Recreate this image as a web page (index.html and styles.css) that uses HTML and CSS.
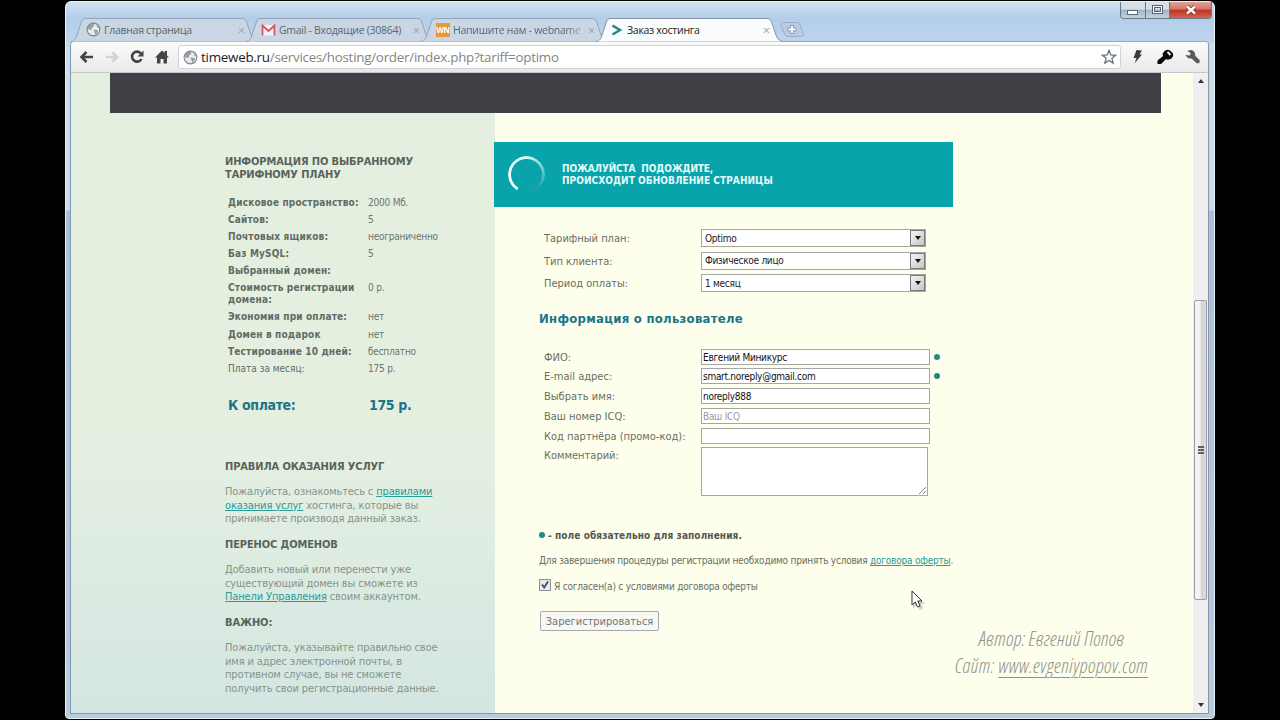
FILE: index.html
```html
<!DOCTYPE html>
<html lang="ru">

<head>
    <meta charset="UTF-8">
    <title>Заказ хостинга</title>
    <link rel="stylesheet" href="styles.css">
</head>

<body>
    <svg class="defs" width="0" height="0">
        <defs>
            <symbol id="tab-shape" viewBox="0 0 187 24">
                <path d="M0 23.5 C4 23 5 20 6 17 L10 5 C11 2 12 .5 15 .5 H171 C174 .5 175 2 176 5 L180 17 C181 20 183 23 187 23.5" />
            </symbol>
            <symbol id="globe" viewBox="0 0 16 16">
                <circle cx="8" cy="8" r="6.8" fill="#e9edf0" stroke="#7f858a" stroke-width="1.2" />
                <path d="M3 4 L6 2 L9 2.5 L8 5 L6 6 L6.5 8 L4 8.5 L2 7z M8 8 L12 8.5 L13 10 L10 13.5 L9 11z M11 3 L14 6 L12 6z" fill="#989da2" />
            </symbol>
        </defs>
    </svg>

    <div class="window">
        <div class="window-buttons">
            <div class="wb wb-min"><svg width="12" height="6"><rect x=".5" y=".5" width="10" height="4" fill="#fff" stroke="#5c6875" /></svg></div>
            <div class="wb wb-max"><svg width="12" height="10"><rect x="1.5" y="1.5" width="8" height="6" fill="none" stroke="#566270" stroke-width="3" /><rect x="1.5" y="1.5" width="8" height="6" fill="none" stroke="#fff" /></svg></div>
            <div class="wb wb-close"><svg width="12" height="10"><path d="M2 1.5 L10 8.5 M10 1.5 L2 8.5" stroke="#7a3030" stroke-width="4" /><path d="M2 1.5 L10 8.5 M10 1.5 L2 8.5" stroke="#fff" stroke-width="2.4" /></svg></div>
        </div>

        <div class="tabs">
            <div class="tab">
                <svg class="tab-bg"><use href="#tab-shape" /></svg>
                <svg class="tab-icon" width="15" height="15"><use href="#globe" /></svg>
                <span class="tab-title">Главная страница</span>
                <span class="tab-close">×</span>
            </div>
            <div class="tab">
                <svg class="tab-bg"><use href="#tab-shape" /></svg>
                <svg class="tab-icon" width="15" height="12"><rect x=".5" y="1" width="14" height="10.5" fill="#f3f0f3" /><path d="M1.5 11.500 V1.500 L7.500 7 L13.500 1.500 V11.500" fill="none" stroke="#d2526a" stroke-width="1.800" /></svg>
                <span class="tab-title">Gmail - Входящие (30864)</span>
                <span class="tab-close">×</span>
            </div>
            <div class="tab">
                <svg class="tab-bg"><use href="#tab-shape" /></svg>
                <span class="tab-icon wn">WN</span>
                <span class="tab-title fade">Напишите нам - webname</span>
                <span class="tab-close">×</span>
            </div>
            <div class="tab active">
                <svg class="tab-bg"><use href="#tab-shape" /></svg>
                <svg class="tab-icon" width="12" height="12"><path d="M1.5 1.5 L9 6 L1.5 10.5" fill="none" stroke="#168a87" stroke-width="2.4" /></svg>
                <span class="tab-title">Заказ хостинга</span>
                <span class="tab-close">×</span>
            </div>
            <svg class="new-tab" width="25" height="15"><path d="M2 .5 H17 Q19 .5 20 3 L23.5 12 Q24 14.5 21 14.5 H8 Q5.500 14.500 4.500 12 L1 3 Q.5 .5 2 .5z" fill="#b9cce3" stroke="#9aaec8" /><path d="M12 3 V12 M7.500 7.500 H16.500" stroke="#8b9eb8" stroke-width="4" /><path d="M12 4 V11 M8.500 7.500 H15.500" stroke="#fff" stroke-width="2" /></svg>
        </div>

        <div class="browser">
            <div class="toolbar">
                <svg class="nav" width="92" height="18" fill="none" stroke="#444" stroke-width="2.6">
                    <path d="M14 9 H2.500 M7.500 4 L2.500 9 L7.500 14" />
                    <path d="M27 9 H38 M33.500 4.500 L38 9 L33.500 13.500" stroke="#d2d2d2" />
                    <path d="M62 5.500 A5 5 0 1 0 62.500 11" />
                    <path d="M64.500 2.500 V8.500 H58.500z" fill="#444" stroke="none" />
                    <path d="M76 9.500 L83 2.500 L85.500 5 V3 H88 V7.500 L90 9.500 H88 V15.500 H84.500 V11 H81.500 V15.500 H78 V9.500z" fill="#444" stroke="none" />
                </svg>
                <div class="address">
                    <svg width="15" height="15"><use href="#globe" /></svg>
                    <span class="url"><b>timeweb.ru</b>/services/hosting/order/index.php?tariff=optimo</span>
                    <svg class="star" width="16" height="16"><path d="M8 1.500 L9.800 6 L14.500 6.300 L10.900 9.300 L12.100 14 L8 11.400 L3.900 14 L5.100 9.300 L1.500 6.300 L6.200 6z" fill="#fff" stroke="#667078" stroke-width="1.300" /></svg>
                </div>
                <svg class="tools" width="72" height="18">
                    <path d="M6.500 2 L12 2.500 L9.500 6.500 L12 6.500 L4.500 15.500 L6.500 10 L3.500 10z" fill="#3c3c3c" />
                    <path d="M34 3.500 Q37 .5 40 2.500 L43 5.500 Q44 8 41.500 10.500 Q38 12.500 36 11 L31 16 H27.500 V12.500 L33 8 Q32 5.500 34 3.500z" fill="#080808" />
                    <path d="M37.500 4 L40.500 7" stroke="#f2f2f2" stroke-width="2" />
                    <path d="M57.500 3 Q61 1 64 3.500 Q65.500 5.500 65 7.500 L69.500 12 Q70.500 15.500 67 15.500 L61.500 10.500 Q57.500 11 55.500 7 L60 7.500 L60.500 5z" fill="#5a5a5a" />
                </svg>
            </div>

            <div class="viewport">
                <div class="page">
                    <div class="site-header"></div>
                    <div class="columns">
                        <div class="sidebar">
                            <h2>ИНФОРМАЦИЯ ПО ВЫБРАННОМУ<br>ТАРИФНОМУ ПЛАНУ</h2>
                            <dl class="plan">
                                <dt>Дисковое пространство:</dt><dd>2000 Мб.</dd>
                                <dt>Сайтов:</dt><dd>5</dd>
                                <dt>Почтовых ящиков:</dt><dd>неограниченно</dd>
                                <dt>Баз MySQL:</dt><dd>5</dd>
                                <dt>Выбранный домен:</dt><dd></dd>
                                <dt>Стоимость регистрации домена:</dt><dd>0 р.</dd>
                                <dt>Экономия при оплате:</dt><dd>нет</dd>
                                <dt>Домен в подарок</dt><dd>нет</dd>
                                <dt>Тестирование 10 дней:</dt><dd>бесплатно</dd>
                                <dt class="light">Плата за месяц:</dt><dd>175 р.</dd>
                            </dl>
                            <div class="total"><span>К оплате:</span><span>175 р.</span></div>

                            <h2>ПРАВИЛА ОКАЗАНИЯ УСЛУГ</h2>
                            <p>Пожалуйста, ознакомьтесь с <a>правилами</a><br><a>оказания услуг</a> хостинга, которые вы<br>принимаете производя данный заказ.</p>
                            <h2>ПЕРЕНОС ДОМЕНОВ</h2>
                            <p>Добавить новый или перенести уже<br>существующий домен вы сможете из<br><a>Панели Управления</a> своим аккаунтом.</p>
                            <h2>ВАЖНО:</h2>
                            <p>Пожалуйста, указывайте правильно свое<br>имя и адрес электронной почты, в<br>противном случае, вы не сможете<br>получить свои регистрационные данные.</p>
                        </div>

                        <div class="main">
                            <div class="wait">
                                <div class="spinner"></div>
                                <div class="wait-text"><span>ПОЖАЛУЙСТА&nbsp; ПОДОЖДИТЕ,</span><br>ПРОИСХОДИТ ОБНОВЛЕНИЕ СТРАНИЦЫ</div>
                            </div>

                            <div class="form selects">
                                <label>Тарифный план:</label><div class="select"><span>Optimo</span><i></i></div>
                                <label>Тип клиента:</label><div class="select"><span>Физическое лицо</span><i></i></div>
                                <label>Период оплаты:</label><div class="select"><span>1 месяц</span><i></i></div>
                            </div>

                            <h3>Информация о пользователе</h3>

                            <div class="form fields">
                                <label>ФИО:</label><div class="field"><div class="input">Евгений Миникурс</div><span class="dot"></span></div>
                                <label>E-mail адрес:</label><div class="field"><div class="input">smart.noreply@gmail.com</div><span class="dot"></span></div>
                                <label>Выбрать имя:</label><div class="field"><div class="input">noreply888</div></div>
                                <label>Ваш номер ICQ:</label><div class="field"><div class="input hint">Ваш ICQ</div></div>
                                <label>Код партнёра (промо-код):</label><div class="field"><div class="input"></div></div>
                                <label>Комментарий:</label>
                                <div class="textarea"><svg width="9" height="9"><path d="M1 8 L8 1 M5 8 L8 5" stroke="#888" /></svg></div>
                            </div>

                            <div class="required"><span class="dot"></span><b>- поле обязательно для заполнения.</b></div>
                            <div class="offer">Для завершения процедуры регистрации необходимо принять условия <a>договора оферты</a>.</div>
                            <div class="agree">
                                <svg width="12" height="12"><rect x=".5" y=".5" width="11" height="11" fill="#e6e8ed" stroke="#8d9298" /><path d="M3 5.500 L5.200 8.500 L9 2.500" fill="none" stroke="#414768" stroke-width="1.800" /></svg>
                                <span>Я согласен(а) с условиями договора оферты</span>
                            </div>
                            <div class="submit">Зарегистрироваться</div>
                        </div>
                    </div>
                </div>
                <div class="scrollbar">
                    <svg width="6" height="4"><path d="M0 4 L3 0 L6 4z" fill="#2e3440" /></svg>
                    <div class="thumb"><i></i><i></i><i></i></div>
                    <svg class="down" width="6" height="4"><path d="M0 0 L3 4 L6 0z" fill="#2e3440" /></svg>
                </div>
            </div>
        </div>
    </div>

    <div class="watermark">
        <div class="author">Автор: Евгений Попов</div>
        <div class="site">Сайт: <u>www.evgeniypopov.com</u></div>
    </div>
    <svg class="cursor" width="14" height="20"><path d="M2 3 V18 L6 15 L9 20 L12 18 L10 14 H14z" fill="#999" opacity=".5" /><path d="M1 1 V15 L4.300 12 L6.500 17 L9 16 L6.800 11 H11z" fill="#fff" stroke="#333" /></svg>
</body>

</html>
```
FILE: styles.css
```css
* {
    box-sizing: border-box;
}

body {
    margin: 0;
    width: 1280px;
    height: 720px;
    overflow: hidden;
    background: #000;
    font-family: "DejaVu Sans Condensed", "DejaVu Sans", sans-serif;
    font-stretch: condensed;
    font-size: 11px;
    color: #666f66;
}

a {
    color: #279c9b;
    text-decoration: underline;
}

.defs {
    position: absolute;
}

/* browser window */
.window {
    position: relative;
    display: flex;
    flex-direction: column;
    width: 1150px;
    height: 718px;
    margin: 1px 0 0 65px;
    padding: 16px 5px 4px 4px;
    border: 1px solid #e6f1fa;
    border-radius: 6px 6px 4px 4px;
    background:
        linear-gradient(180deg, #d2e2f2 0, #b3cde9 16px, #bdd4ec 40px, transparent 41px),
        linear-gradient(180deg, #cbdcea 0, #cbdcea 208px, #a9c0d4 209px, #b9cbdd 100%);
}

.window-buttons {
    position: absolute;
    top: 0;
    right: 2px;
    display: flex;
    height: 17px;
    border: 1px solid #65778b;
    border-top: 0;
    border-radius: 0 0 4px 4px;
    overflow: hidden;
}

.wb {
    display: flex;
    align-items: center;
    justify-content: center;
    width: 25px;
    border-right: 1px solid #65778b;
    background: linear-gradient(#d5dfe9 0 45%, #a3b3c5 50%, #c3d3e4);
}

.wb-min svg {
    margin-top: 5px;
}

.wb-max {
    width: 24px;
}

.wb-close {
    width: 41px;
    border-right: 0;
    background: linear-gradient(#e2a196 0, #d37668 45%, #bd3527 50%, #d5614c);
}

.tabs {
    display: flex;
    height: 23px;
    margin-left: 1px;
}

.tab {
    position: relative;
    display: flex;
    align-items: center;
    flex: none;
    width: 187px;
    height: 23px;
    margin-right: -12px;
    padding-left: 15px;
    font-family: "Open Sans", sans-serif;
    font-stretch: normal;
    font-size: 10.5px;
    letter-spacing: -.28px;
    color: #5c6670;
}

.tab-bg {
    position: absolute;
    left: 0;
    top: 0;
    width: 187px;
    height: 24px;
    fill: #c9d7e5;
    stroke: #93a3b5;
}

.tab.active {
    z-index: 2;
    color: #222;
}

.active .tab-bg {
    fill: #fafbfc;
    stroke: #8494a6;
}

.tab-icon {
    position: relative;
    flex: none;
    margin-right: 3px;
}

.active .tab-icon {
    margin-right: 4px;
}

.wn {
    width: 14px;
    height: 14px;
    background: #e79a3a;
    color: #fff;
    font-size: 8px;
    font-weight: bold;
    line-height: 14px;
    text-align: center;
}

.tab-title {
    position: relative;
    white-space: nowrap;
}

.fade {
    -webkit-mask-image: linear-gradient(90deg, #000 112px, rgba(0, 0, 0, .2) 132px);
}

.tab-close {
    position: relative;
    margin-left: auto;
    margin-right: 13px;
    font-size: 13px;
    line-height: 14px;
    color: #9aa5b0;
}

.new-tab {
    margin: 4px 0 0 9px;
}

.browser {
    display: flex;
    flex-direction: column;
    flex: 1;
    border: 1px solid #8497ad;
    border-top-color: #98a8b9;
    border-radius: 4px 4px 0 0;
    overflow: hidden;
    background: #f2f2f2;
}

.toolbar {
    display: flex;
    align-items: center;
    flex: none;
    height: 31px;
    padding: 0 6px 0 6px;
    border-bottom: 1px solid #c5c8cb;
    background: linear-gradient(#fbfbfb, #e9e9e9);
}

.nav {
    margin: 0 7px 0 2px;
    flex: none;
}

.address {
    display: flex;
    align-items: center;
    width: 944px;
    height: 24px;
    padding: 0 3px 0 4px;
    border: 1px solid #cfd1d3;
    border-radius: 3px;
    background: #fff;
}

.url {
    margin-left: 3px;
    font-family: "Open Sans", sans-serif;
    font-stretch: normal;
    font-size: 13.4px;
    line-height: 18px;
    letter-spacing: -.26px;
    color: #858585;
}

.url b {
    font-weight: normal;
    color: #1c1c1c;
}

.star {
    margin-left: auto;
}

.tools {
    margin-left: 9px;
}

/* page */
.viewport {
    display: flex;
    flex: 1;
    min-height: 0;
}

.page {
    flex: 1;
    background: linear-gradient(90deg, transparent 424px, #fdfeec 424px), linear-gradient(#e5efdf 0, #e4efe1 60%, #d4e6e1 100%);
}

.site-header {
    height: 40px;
    margin: 0 32px 0 39px;
    background: #3f4147;
}

.columns {
    display: flex;
    height: 600px;
}

.sidebar {
    flex: none;
    width: 423px;
    padding: 42px 0 0 154px;
    color: #879389;
}

.sidebar h2 {
    margin: 0;
    font-size: 11px;
    line-height: 13.4px;
    letter-spacing: -.12px;
    color: #59635c;
    white-space: nowrap;
}

.plan {
    display: grid;
    grid-template-columns: 140px 120px;
    row-gap: 5px;
    margin: 15px 0 0 3px;
    font-size: 10px;
    line-height: 12.1px;
    color: #6b766c;
}

.plan dt {
    font-weight: bold;
    letter-spacing: .16px;
    color: #5f6c64;
}

.plan dt.light {
    font-weight: normal;
    letter-spacing: 0;
}

.plan dd {
    margin: 0;
    letter-spacing: -.22px;
}

.total {
    display: grid;
    grid-template-columns: 141px 120px;
    margin: 21px 0 46px 3px;
    font-size: 14px;
    line-height: 18px;
    letter-spacing: -.35px;
    font-weight: bold;
    color: #1b7488;
}

.sidebar p {
    margin: 12px 0 12.4px;
    font-size: 11px;
    line-height: 13.4px;
    letter-spacing: -.13px;
    white-space: nowrap;
}

.main {
    flex: 1;
    padding-top: 29px;
}

.wait {
    display: flex;
    align-items: center;
    width: 459px;
    height: 65px;
    padding-left: 14px;
    background: #08a3ab;
    color: #e4fbfa;
}

.spinner {
    width: 37px;
    height: 37px;
    border-radius: 50%;
    background: conic-gradient(#d9f8f5 0, #55bfc2 90deg, #249fa6 140deg, transparent 175deg 210deg, #fff 212deg, #d9f8f5 360deg);
    -webkit-mask-image: radial-gradient(circle, transparent 15px, #000 16px);
}

.wait-text {
    margin-left: 17px;
    font-size: 10px;
    line-height: 12px;
    letter-spacing: .07px;
    font-weight: bold;
    white-space: nowrap;
}

.wait-text span {
    letter-spacing: -.14px;
}

.form {
    display: grid;
    grid-template-columns: 157px auto;
    margin-left: 50px;
}

.form label {
    font-size: 11px;
    white-space: nowrap;
    color: #6a6f62;
}

.selects {
    grid-auto-rows: 22.5px;
    margin-top: 22px;
}

.selects label {
    line-height: 20px;
}

.select {
    display: flex;
    align-items: center;
    justify-content: space-between;
    width: 225px;
    height: 18px;
    padding-left: 3px;
    border: 1px solid #a4a6a9;
    background: #fff;
    font-size: 10px;
    letter-spacing: -.27px;
    color: #222;
}

.select i {
    display: flex;
    align-items: center;
    justify-content: center;
    width: 15px;
    height: 16px;
    border: 1px solid #77797d;
    background: linear-gradient(135deg, #f4f4f4, #c4c7c9);
}

.select i::after {
    content: "";
    border: 3px solid transparent;
    border-top: 4px solid #111;
    border-bottom: 0;
}

h3 {
    margin: 12px 0 0 45px;
    font-size: 13px;
    line-height: 19px;
    letter-spacing: .27px;
    color: #1b7488;
}

.fields {
    grid-template-rows: repeat(5, 19.8px) 50px;
    margin-top: 21px;
}

.fields label {
    line-height: 17px;
}

.field {
    display: flex;
    align-items: center;
    height: 16px;
}

.input {
    width: 229px;
    height: 16px;
    padding-left: 1px;
    border: 1px solid #a4a6a9;
    background: #fff;
    font-size: 10px;
    line-height: 15px;
    letter-spacing: -.28px;
    color: #111;
    white-space: nowrap;
}

.input.hint {
    color: #999;
}

.dot {
    width: 6px;
    height: 6px;
    margin-left: 4px;
    border-radius: 50%;
    background: #1e8c85;
}

.textarea {
    display: flex;
    align-items: flex-end;
    justify-content: flex-end;
    width: 227px;
    height: 49px;
    border: 1px solid #a4a6a9;
    background: #fff;
}

.required {
    display: flex;
    align-items: center;
    margin: 31px 0 0 45px;
    height: 14px;
    font-size: 10px;
    letter-spacing: .09px;
    color: #53594f;
}

.required .dot {
    margin: 0 3px 0 0;
}

.offer {
    margin: 12px 0 0 45px;
    font-size: 10px;
    line-height: 13px;
    letter-spacing: -.22px;
    white-space: nowrap;
}

.agree {
    display: flex;
    align-items: center;
    gap: 3px;
    height: 14px;
    margin: 11px 0 0 45px;
    font-size: 10px;
    letter-spacing: -.21px;
}

.agree span {
    padding-top: 3px;
}

.submit {
    width: 119px;
    height: 20px;
    margin: 19px 0 0 46px;
    border: 1px solid #a5a8ae;
    border-radius: 2px;
    background: #f7f7f4;
    font-size: 11px;
    line-height: 19px;
    text-align: center;
    color: #72767a;
}

.scrollbar {
    display: flex;
    flex-direction: column;
    align-items: center;
    width: 15px;
    padding: 6px 0;
    background: #f0eff0;
}

.thumb {
    display: flex;
    flex-direction: column;
    align-items: center;
    justify-content: center;
    gap: 1px;
    width: 13px;
    height: 300px;
    margin-top: 217px;
    border: 1px solid #9b9ea2;
    border-radius: 2px;
    background: linear-gradient(90deg, #f3f3f3 0 45%, #d3d4d6 60%, #dcdcdd);
}

.thumb i {
    width: 6px;
    height: 2px;
    background: #5e6267;
}

.down {
    margin-top: auto;
}

/* overlays of the recording */
.watermark {
    position: absolute;
    left: 955px;
    top: 625px;
    width: 200px;
    font-family: "Open Sans", sans-serif;
    font-stretch: condensed;
    font-style: italic;
    font-weight: 300;
    font-size: 20px;
    line-height: 27px;
    color: #8f9288;
    white-space: nowrap;
}

.watermark u {
    text-underline-offset: 4px;
    text-decoration-thickness: 1px;
}

.author {
    margin-left: 24px;
    letter-spacing: .2px;
}

.site {
    letter-spacing: .42px;
}

.cursor {
    position: absolute;
    left: 911px;
    top: 590px;
}
```
